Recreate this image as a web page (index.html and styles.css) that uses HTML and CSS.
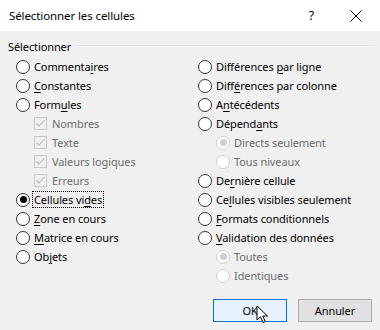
FILE: index.html
```html
<!DOCTYPE html>
<html lang="fr">
<head>
<meta charset="utf-8">
<link rel="stylesheet" href="styles.css">
</head>
<body>
<div class="dialog">
  <div class="titlebar">
    <span class="title">Sélectionner les cellules</span>
    <span class="help">?</span>
    <svg class="close" width="12" height="12" viewBox="0 0 12 12"><path d="M0.5 0.5L11.5 11.5M11.5 0.5L0.5 11.5" stroke="#000" stroke-width="1" fill="none"/></svg>
  </div>
  <div class="content">
    <div class="group-head"><span class="group-label">Sélectionner</span><span class="group-line"></span></div>
    <div class="columns">
      <div class="col col-left">
        <div class="row"><span class="radio"></span><span class="lbl">Commenta<u>i</u>res</span></div>
        <div class="row"><span class="radio"></span><span class="lbl"><u>C</u>onstantes</span></div>
        <div class="row"><span class="radio"></span><span class="lbl">Form<u>u</u>les</span></div>
        <div class="row sub"><span class="check"><svg width="13" height="13" viewBox="0 0 13 13"><path d="M2.5 6.5L5 9L10.5 3" stroke="#b8b8b8" stroke-width="1.1" fill="none"/></svg></span><span class="lbl dis">Nombres</span></div>
        <div class="row sub"><span class="check"><svg width="13" height="13" viewBox="0 0 13 13"><path d="M2.5 6.5L5 9L10.5 3" stroke="#b8b8b8" stroke-width="1.1" fill="none"/></svg></span><span class="lbl dis">Texte</span></div>
        <div class="row sub"><span class="check"><svg width="13" height="13" viewBox="0 0 13 13"><path d="M2.5 6.5L5 9L10.5 3" stroke="#b8b8b8" stroke-width="1.1" fill="none"/></svg></span><span class="lbl dis">Valeurs logiques</span></div>
        <div class="row sub"><span class="check"><svg width="13" height="13" viewBox="0 0 13 13"><path d="M2.5 6.5L5 9L10.5 3" stroke="#b8b8b8" stroke-width="1.1" fill="none"/></svg></span><span class="lbl dis">Erreurs</span></div>
        <div class="row"><span class="radio on"></span><span class="lbl focus">Cellules vi<u>d</u>es</span></div>
        <div class="row"><span class="radio"></span><span class="lbl"><u>Z</u>one en cours</span></div>
        <div class="row"><span class="radio"></span><span class="lbl"><u>M</u>atrice en cours</span></div>
        <div class="row"><span class="radio"></span><span class="lbl">Ob<u>j</u>ets</span></div>
      </div>
      <div class="col col-right">
        <div class="row"><span class="radio"></span><span class="lbl">Différences <u>p</u>ar ligne</span></div>
        <div class="row"><span class="radio"></span><span class="lbl">Diff<u>é</u>rences par colonne</span></div>
        <div class="row"><span class="radio"></span><span class="lbl">A<u>n</u>técédents</span></div>
        <div class="row"><span class="radio"></span><span class="lbl">Dépend<u>a</u>nts</span></div>
        <div class="row sub"><span class="radio dis on"></span><span class="lbl dis">Directs seulement</span></div>
        <div class="row sub"><span class="radio dis"></span><span class="lbl dis">Tous niveaux</span></div>
        <div class="row"><span class="radio"></span><span class="lbl">De<u>r</u>nière cellule</span></div>
        <div class="row"><span class="radio"></span><span class="lbl">Ce<u>l</u>lules visibles seulement</span></div>
        <div class="row"><span class="radio"></span><span class="lbl"><u>F</u>ormats conditionnels</span></div>
        <div class="row"><span class="radio"></span><span class="lbl"><u>V</u>alidation des données</span></div>
        <div class="row sub"><span class="radio dis on"></span><span class="lbl dis">Toutes</span></div>
        <div class="row sub"><span class="radio dis"></span><span class="lbl dis">Identiques</span></div>
      </div>
    </div>
    <div class="buttons">
      <button class="btn btn-default">OK</button>
      <button class="btn">Annuler</button>
    </div>
  </div>
  <svg class="cursor" width="14" height="20" viewBox="0 0 14 20"><path d="M1 1L1 15L4.5 11.8L7 17.5L9.2 16.5L6.8 11L11.5 11Z" fill="#fff" stroke="#000" stroke-width="1"/></svg>
</div>
</body>
</html>
```
FILE: styles.css
```css
html, body {
  margin: 0;
  padding: 0;
}
body {
  font-family: "Noto Sans", "Open Sans", sans-serif;
  font-size: 11px;
  letter-spacing: -0.1px;
  color: #000;
  background: #f0f0f0;
}
.dialog {
  position: relative;
  width: 380px;
  height: 330px;
  background: #f0f0f0;
  overflow: hidden;
}
.titlebar {
  height: 31px;
  background: #fff;
  display: flex;
  align-items: center;
}
.title {
  margin-left: 9px;
  font-size: 11.5px;
  flex: 1;
}
.help {
  font-size: 12.5px;
  margin-right: 36px;
}
.close {
  margin-right: 18px;
}
.content {
  padding: 7px 8px 0 8px;
}
.group-head {
  display: flex;
  align-items: center;
  height: 16px;
}
.group-label {
  margin-right: 6px;
}
.group-line {
  flex: 1;
  height: 0;
  border-top: 1px solid #dcdcdc;
  border-bottom: 1px solid #fff;
}
.columns {
  display: flex;
  margin-top: 3px;
}
.col {
  display: flex;
  flex-direction: column;
}
.col-left {
  width: 182px;
  padding-left: 8px;
}
.row {
  height: 19px;
  display: flex;
  align-items: center;
}
.row.sub {
  padding-left: 18px;
}
.radio {
  box-sizing: border-box;
  width: 14px;
  height: 14px;
  border-radius: 50%;
  border: 1px solid #333;
  background: #fff;
  margin-right: 4px;
  display: flex;
  align-items: center;
  justify-content: center;
  flex-shrink: 0;
}
.radio.on::after {
  content: "";
  width: 7px;
  height: 7px;
  border-radius: 50%;
  background: #000;
}
.radio.dis {
  border-color: #cfcfcf;
  background: #fff;
}
.radio.dis.on::after {
  background: #cfcfcf;
}
.check {
  box-sizing: border-box;
  width: 13px;
  height: 13px;
  border: 1px solid #c8c8c8;
  background: #f0f0f0;
  margin-right: 5px;
  display: flex;
  flex-shrink: 0;
}
.check svg {
  margin: -1px;
}
.lbl {
  white-space: nowrap;
  line-height: 15px;
}
.lbl u {
  text-decoration-thickness: 1px;
  text-underline-offset: 2px;
}
.lbl.dis {
  color: #6d6d6d;
}
.lbl.focus {
  outline: 1px dotted #000;
  outline-offset: 0;
  padding: 0 1px;
  margin-left: -1px;
}
.buttons {
  display: flex;
  justify-content: flex-end;
  gap: 11px;
  margin-top: 14px;
}
.btn {
  box-sizing: border-box;
  width: 74px;
  height: 23px;
  font-family: inherit;
  font-size: 11px;
  letter-spacing: -0.1px;
  color: #000;
  border: 1px solid #adadad;
  background: #e1e1e1;
  padding: 0;
  margin: 0;
}
.btn-default {
  border: 1px solid #0078d7;
  background: #e5f1fb;
}
.cursor {
  position: absolute;
  left: 256px;
  top: 305px;
}
```
